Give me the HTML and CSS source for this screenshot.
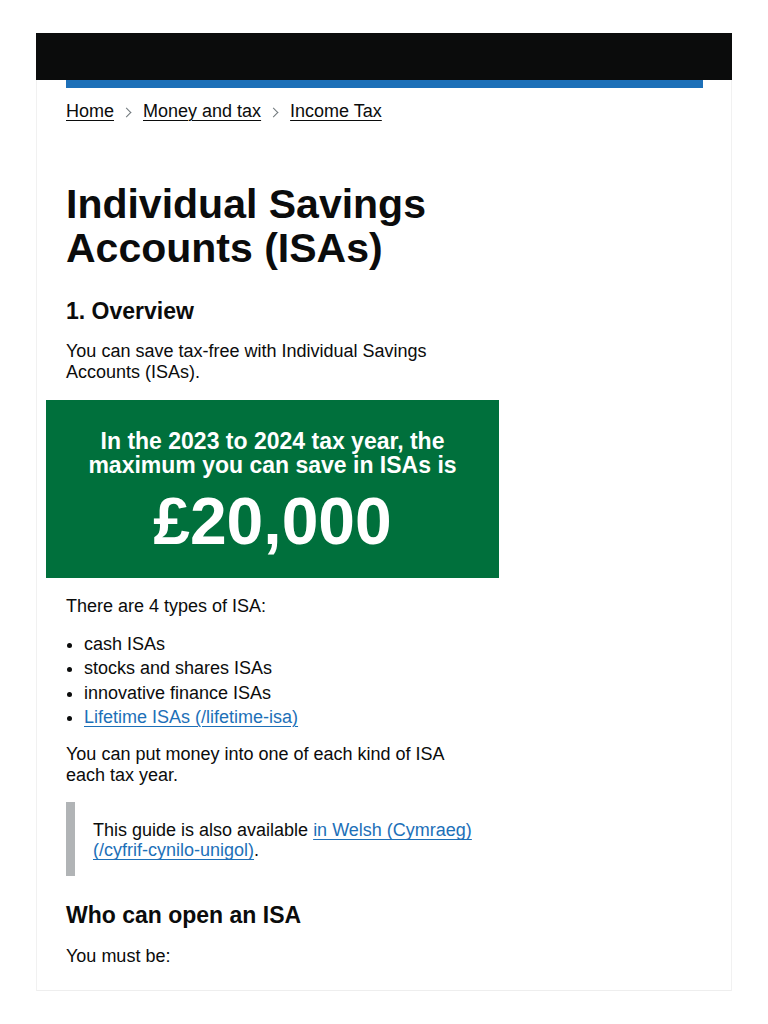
FILE: index.html
```html
<!DOCTYPE html>
<html lang="en">
<head>
<meta charset="utf-8">
<title>Individual Savings Accounts (ISAs)</title>
<link rel="stylesheet" href="styles.css">
</head>
<body>
<div class="page">
  <header class="masthead"></header>
  <div class="blue-bar"></div>
  <main class="content">
    <nav class="breadcrumbs">
      <a href="#" class="crumb">Home</a>
      <span class="chev"></span>
      <a href="#" class="crumb">Money and tax</a>
      <span class="chev"></span>
      <a href="#" class="crumb">Income Tax</a>
    </nav>
    <h1 class="title">Individual Savings Accounts (ISAs)</h1>
    <h2 class="section">1. Overview</h2>
    <p class="body">You can save tax-free with Individual Savings Accounts (ISAs).</p>
    <div class="callout">
      <p class="callout-text">In the 2023 to 2024 tax year, the maximum you can save in ISAs is</p>
      <p class="callout-big">£20,000</p>
    </div>
    <p class="body after-callout">There are 4 types of ISA:</p>
    <ul class="list">
      <li>cash ISAs</li>
      <li>stocks and shares ISAs</li>
      <li>innovative finance ISAs</li>
      <li><a href="#" class="link">Lifetime ISAs (/lifetime-isa)</a></li>
    </ul>
    <p class="body after-list">You can put money into one of each kind of ISA each tax year.</p>
    <div class="inset">
      <p class="inset-text">This guide is also available <a href="#" class="link">in Welsh (Cymraeg) (/cyfrif-cynilo-unigol)</a>.</p>
    </div>
    <h2 class="section section-2">Who can open an ISA</h2>
    <p class="body last">You must be:</p>
  </main>
</div>
</body>
</html>
```

FILE: styles.css
```css
* { box-sizing: border-box; }

html, body {
  margin: 0;
  padding: 0;
  background: #ffffff;
}

body {
  font-family: "Liberation Sans", Arial, sans-serif;
  color: #0b0c0c;
}

.page {
  margin: 33px 0 0 36px;
  width: 696px;
  border-left: 1px solid #f1f1f1;
  border-right: 1px solid #f1f1f1;
  border-bottom: 1px solid #eeeeee;
}

.masthead {
  height: 47px;
  background: #0b0c0c;
  margin: 0 -1px;
}

.blue-bar {
  height: 8px;
  margin: 0 28px 0 29px;
  background: #1d70b8;
}

.content {
  padding: 11px 0 23px 29px;
  width: 443px;
}

.breadcrumbs {
  display: flex;
  align-items: center;
  font-size: 18px;
  line-height: 24px;
}

.crumb {
  color: #0b0c0c;
  text-decoration: underline;
  text-decoration-thickness: 1px;
  text-underline-offset: 3px;
}

.chev {
  width: 7px;
  height: 7px;
  border-top: 1px solid #6f777b;
  border-right: 1px solid #6f777b;
  transform: rotate(45deg);
  margin: 2px 13px 0 9px;
}

.title {
  margin: 59px 0 0 0;
  font-size: 41px;
  line-height: 44px;
  font-weight: 700;
}

.section {
  margin: 27px 0 0 0;
  font-size: 23px;
  line-height: 28px;
  font-weight: 700;
}

.section-2 {
  margin-top: 25px;
}

.body {
  margin: 16px 0 0 0;
  font-size: 18px;
  line-height: 21px;
}

.after-callout {
  margin-top: 18px;
}

.after-list {
  margin-top: 15px;
}

.callout {
  margin: 17px 0 0 -20px;
  width: 453px;
  background: #00703c;
  color: #ffffff;
  text-align: center;
  padding: 29px 20px 21px;
}

.callout-text {
  margin: 0;
  font-size: 23px;
  line-height: 24px;
  font-weight: 700;
}

.callout-big {
  margin: 8px 0 0 0;
  font-size: 66px;
  line-height: 72px;
  font-weight: 700;
}

.list {
  margin: 15px 0 0 0;
  padding-left: 18px;
  font-size: 18px;
  line-height: 24.33px;
}

.link {
  color: #1d70b8;
  text-decoration: underline;
  text-decoration-thickness: 1px;
  text-underline-offset: 3px;
}

.inset {
  margin-top: 16px;
  border-left: 9px solid #b1b4b6;
  padding: 18px 0 16px 18px;
}

.inset-text {
  margin: 0;
  font-size: 18px;
  line-height: 20px;
}

.last {
  margin-top: 17px;
}
```
